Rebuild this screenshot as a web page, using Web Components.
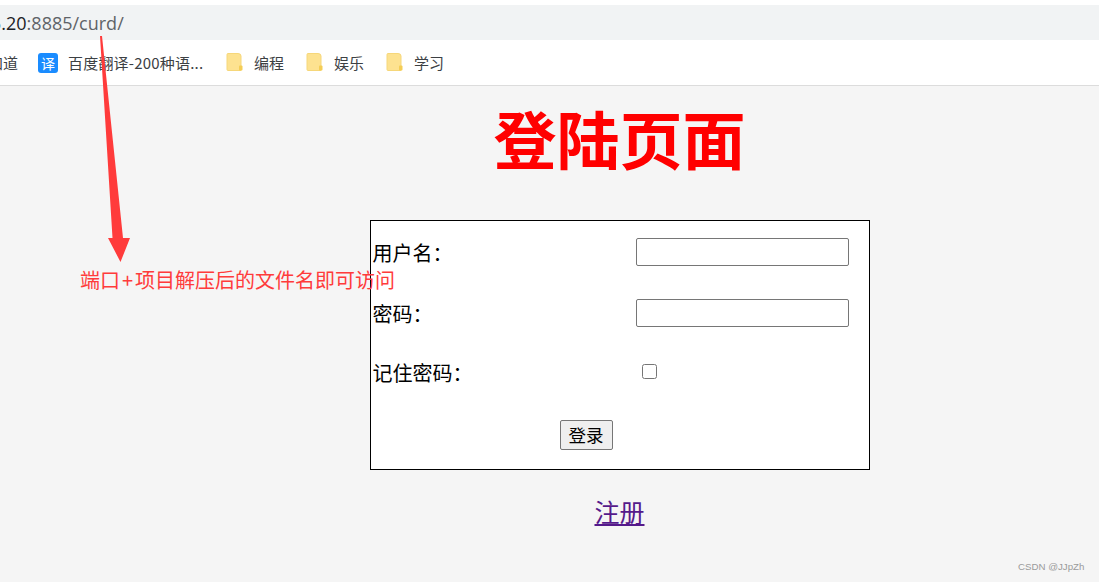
<!DOCTYPE html>
<html lang="zh-CN"><head><meta charset="utf-8"><title>登陆页面</title>
<style>
html,body{margin:0;padding:0;height:100%;overflow:hidden}
body{width:1099px;height:582px;background:#f5f5f5;font-family:"Noto Sans CJK SC","Noto Sans",sans-serif;position:relative}
</style></head><body>
<browser-chrome></browser-chrome>
<login-page></login-page>
<call-out></call-out>
<water-mark>CSDN @JJpZh</water-mark>
<script>
function def(name,html){customElements.define(name,class extends HTMLElement{constructor(){super();this.attachShadow({mode:'open'}).innerHTML=html}})}
const folder='<svg width="20" height="20" viewBox="0 0 20 20"><path d="M1 1.500Q1 .5 2 .5H12Q15 .5 15 3V17.500H2Q1 17.500 1 16.500Z" fill="#fde290" stroke="#f6d77a"/><rect x="13" y="12.500" width="3.500" height="5" rx="1" fill="#f4cd55"/></svg>';
def('browser-chrome',`<style>
:host{display:block;height:86px;background:#fff;box-sizing:border-box;padding-top:5px;border-bottom:1px solid #dcdcdc;overflow:hidden}
.addr{height:35px;background:#f1f3f4;display:flex;align-items:center;overflow:hidden;font:18px "Open Sans","Noto Sans",sans-serif;color:#5f6368;white-space:nowrap}
.addr span{margin-left:-9px}.addr b{font-weight:400;color:#202124}
.bar{height:45px;display:flex;align-items:center;font-size:15px;color:#3c4043;white-space:nowrap;overflow:hidden}
.b{display:flex;align-items:center}
.b0{margin-left:-12px;width:50px}
.yi{width:20px;height:20px;border-radius:3px;background:#1a8cff;color:#fff;font-size:14px;line-height:20px;text-align:center;margin-right:10px;flex:none}
.b1{width:188px;letter-spacing:.2px}
.f{width:28px;flex:none;display:flex}
.fb{width:80px}
</style>
<div class="addr"><span>5<b>.20</b>:8885/curd/</span></div>
<div class="bar">
<div class="b b0">知道</div>
<div class="b b1"><span class="yi">译</span>百度翻译-200种语...</div>
<div class="b fb"><span class="f">${folder}</span>编程</div>
<div class="b fb"><span class="f">${folder}</span>娱乐</div>
<div class="b fb"><span class="f">${folder}</span>学习</div>
</div>`);
def('login-page',`<style>
:host{display:flex;flex-direction:column;align-items:center;color:#000;padding-left:140px}
h1{margin:9px 0 0;height:125px;font-size:63px;line-height:84px;font-weight:700;color:#f00;font-family:"Noto Sans CJK SC",sans-serif}
form{box-sizing:border-box;width:500px;height:250px;background:#fff;border:1px solid #000;display:grid;grid-template-columns:263px 1fr;grid-template-rows:61px 60px 58px 69px;padding-left:2px;align-items:center;font-size:20px}
label{display:block;padding-top:2px}
input[type=text],input[type=password]{box-sizing:border-box;width:213px;height:28px;border:1px solid #767676;border-radius:2px;background:#fff;margin:17px 0 0;padding:0 2px;display:block;align-self:start}
input[type=checkbox]{width:15px;height:15px;margin:22px 0 0 6px;display:block;align-self:start}
.sub{grid-column:1/3;display:flex;justify-content:flex-start;padding-left:187px}
button{box-sizing:border-box;width:53px;height:30px;padding:0;font:17.500px "Noto Sans CJK SC",sans-serif;line-height:26px;background:#efefef;border:1px solid #767676;border-radius:2px;color:#000}
a{margin-top:23px;font-size:25px;line-height:37px;color:#551a8b;text-decoration:underline}
</style>
<h1>登陆页面</h1>
<form onsubmit="return false">
<label>用户名：</label><input type="text" aria-label="用户名">
<label>密码：</label><input type="password" aria-label="密码">
<label>记住密码：</label><input type="checkbox" aria-label="记住密码">
<div class="sub"><button>登录</button></div>
</form>
<a href="#">注册</a>`);
def('call-out',`<style>
:host{display:block;position:absolute;left:0;top:0;width:1099px;height:582px;pointer-events:none}
svg{position:absolute;left:0;top:0}
.t{position:absolute;left:80px;top:266px;font-size:20px;line-height:28px;color:#ff3b3b;white-space:nowrap}
.p{padding:0 2px}
</style>
<svg width="1099" height="582"><polygon points="100,36 102,36 123,238 130,238 120.500,262 108,238 112.500,238" fill="#ff3b3b"/></svg>
<span class="t">端口<span class="p">+</span>项目解压后的文件名即可访问</span>`);
def('water-mark',`<style>:host{position:absolute;left:1018px;top:561px;font:9.700px "Liberation Sans",sans-serif;color:#9a9a9a}</style><slot></slot>`);
</script>
</body></html>
